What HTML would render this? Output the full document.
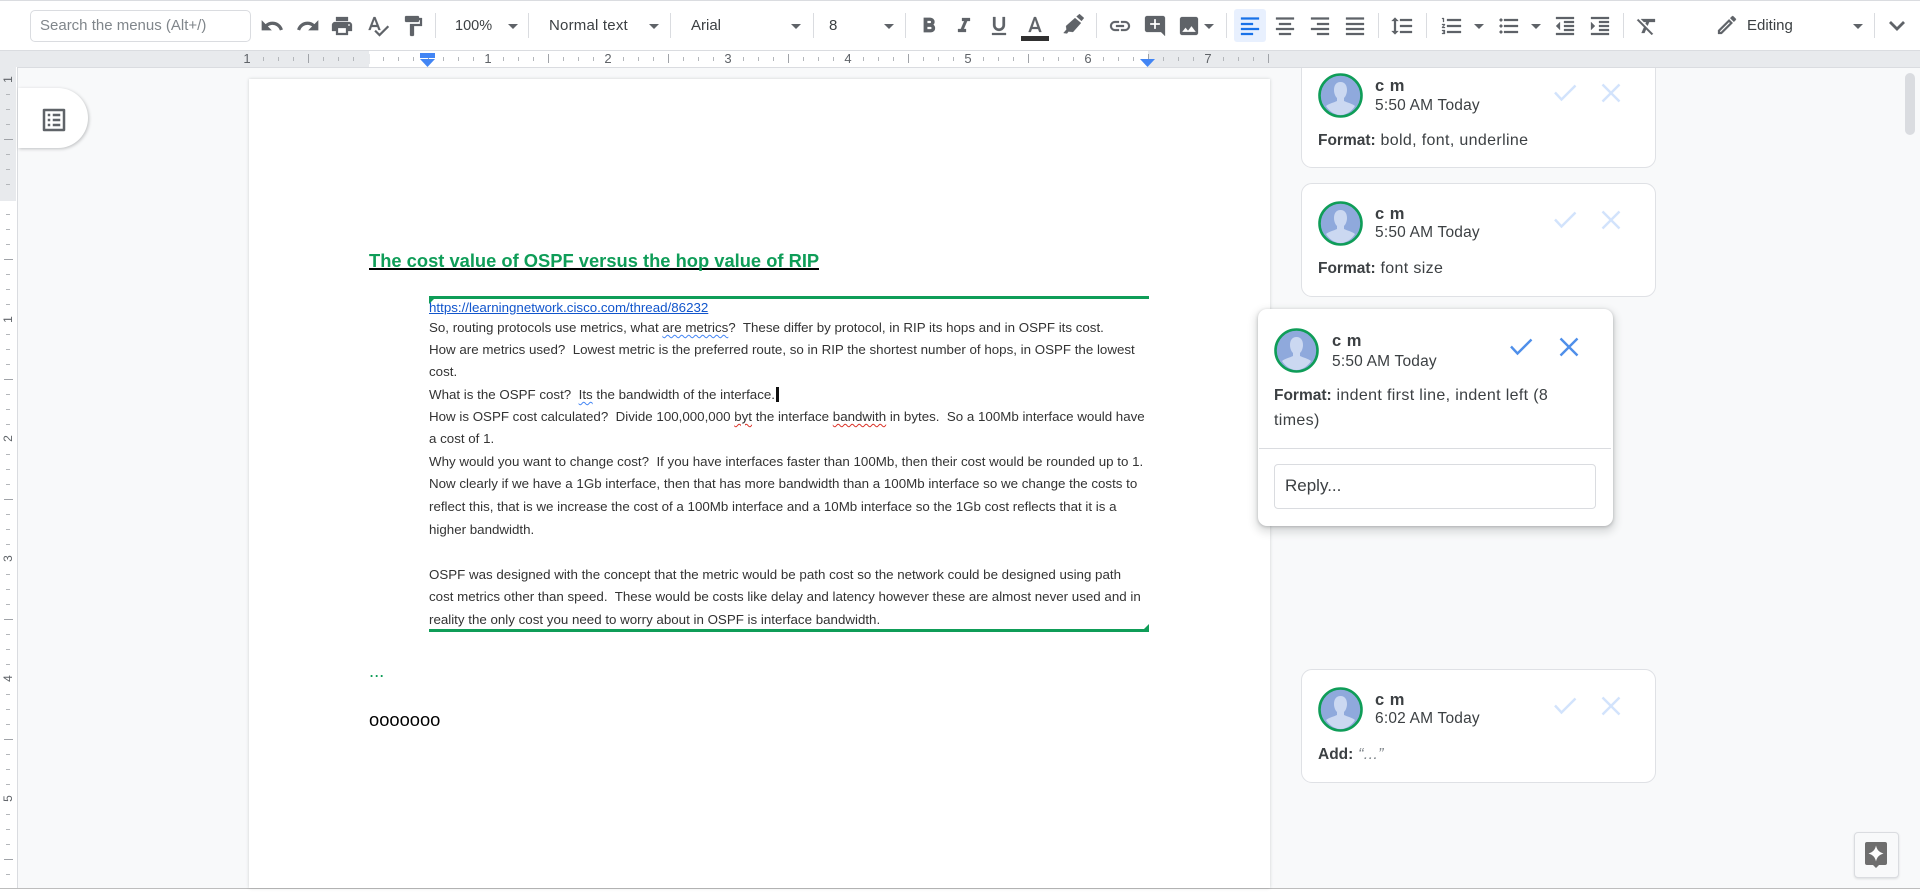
<!DOCTYPE html>
<html><head><meta charset="utf-8"><style>
html,body{margin:0;padding:0;width:1920px;height:895px;overflow:hidden;background:#fff;font-family:"Liberation Sans",sans-serif}
*{box-sizing:border-box}
.a{position:absolute}
svg.i{position:absolute;width:24px;height:24px;fill:#5f6368;top:14px;stroke:#5f6368;stroke-width:.25}
.sep{position:absolute;top:13px;width:1px;height:25px;background:#dadce0}
.car{position:absolute;top:24px;width:0;height:0;border-left:5px solid transparent;border-right:5px solid transparent;border-top:5px solid #5f6368}
.tt{position:absolute;top:16px;line-height:20px;font-size:15px;color:#3c4043;white-space:nowrap}
.d{position:absolute;top:51px;height:15px;line-height:15px;font-size:13px;color:#5f6368;width:12px;text-align:center}
.vd{position:absolute;left:2px;width:13px;height:13px;line-height:13px;font-size:12px;text-align:center;color:#5f6368;transform:rotate(-90deg)}
.l{position:absolute;left:429px;height:20px;line-height:20px;font-size:13.33px;color:#333;white-space:nowrap}
.sb{text-decoration:underline wavy #4285f4 1px;text-underline-offset:2px}
.sr{text-decoration:underline wavy #d93025 1px;text-underline-offset:2px}
.card{position:absolute;left:1301px;width:354.5px;height:114px;background:#fff;border:1px solid #dfe1e5;border-radius:11px}
.av{position:absolute;width:45px;height:45px}
.nm{position:absolute;font-size:16.5px;font-weight:bold;color:#3c4043;line-height:20px;letter-spacing:.5px;white-space:nowrap}
.tm{position:absolute;font-size:15.5px;color:#3c4043;line-height:20px;letter-spacing:.2px;white-space:nowrap}
.tx{position:absolute;font-size:16px;color:#3c4043;line-height:20px;letter-spacing:.35px;white-space:nowrap}
.tx b{font-size:15.5px;letter-spacing:0}
.ck{position:absolute;width:30px;height:24px;fill:none;stroke:#d2e3fc;stroke-width:2.4}
</style></head><body>

<!-- background -->
<div class="a" style="left:0;top:67px;width:1920px;height:821px;background:#f8f9fa"></div>
<div class="a" style="left:0;top:888px;width:1920px;height:1px;background:#bdbdbd"></div>

<!-- page -->
<div class="a" style="left:249px;top:79px;width:1020.5px;height:809px;background:#fff;box-shadow:0 0 3px rgba(60,64,67,.22)"></div>

<!-- cards clipped region -->
<div class="a" style="left:0;top:67px;width:1920px;height:821px;overflow:hidden">
  <div style="position:absolute;left:0;top:-67px;width:1920px;height:895px">
    <div class="card" style="top:54px"></div>
    <div class="card" style="top:182.5px"></div>
    <div class="card" style="top:668.5px"></div>
  </div>
</div>

<!-- toolbar -->
<div class="a" style="left:0;top:0;width:1920px;height:1px;background:#dadce0"></div>
<div class="a" style="left:0;top:1px;width:1920px;height:50px;background:#fff;border-bottom:1px solid #dadce0"></div>
<div class="a" style="left:29.5px;top:9.5px;width:221px;height:32.5px;border:1px solid #dadce0;border-radius:5px"></div>
<div class="tt" style="left:40px;color:#80868b;font-size:15px">Search the menus (Alt+/)</div>

<svg class="i" style="left:260px;stroke-width:.7" viewBox="0 0 24 24"><path d="M12.5 8c-2.65 0-5.05.99-6.9 2.6L2 7v9h9l-3.62-3.62c1.39-1.16 3.16-1.88 5.12-1.88 3.54 0 6.55 2.31 7.6 5.5l2.37-.78C21.08 11.03 17.15 8 12.5 8z"/></svg>
<svg class="i" style="left:296px;stroke-width:.7" viewBox="0 0 24 24"><path d="M18.4 10.6C16.55 8.99 14.15 8 11.5 8c-4.65 0-8.58 3.03-9.96 7.22L3.9 16c1.05-3.19 4.05-5.5 7.6-5.5 1.95 0 3.73.72 5.12 1.88L13 16h9V7l-3.6 3.6z"/></svg>
<svg class="i" style="left:330px" viewBox="0 0 24 24"><path d="M19 8H5c-1.66 0-3 1.34-3 3v6h4v4h12v-4h4v-6c0-1.66-1.34-3-3-3zm-3 11H8v-5h8v5zm3-7c-.55 0-1-.45-1-1s.45-1 1-1 1 .45 1 1-.45 1-1 1zm-1-9H6v4h12V3z"/></svg>
<svg class="i" style="left:366px" viewBox="0 0 24 24"><path d="M12.45 16h2.09L9.43 3H7.57L2.46 16h2.09l1.12-3h5.64l1.14 3zm-6.02-5L8.5 5.48 10.57 11H6.43zm15.16.59l-8.09 8.09L9.83 16l-1.41 1.41 5.09 5.09L23 13l-1.41-1.41z"/></svg>
<svg class="i" style="left:401px" viewBox="0 0 24 24"><path d="M18 4V3c0-.55-.45-1-1-1H5c-.55 0-1 .45-1 1v4c0 .55.45 1 1 1h12c.55 0 1-.45 1-1V6h1v4H9v11c0 .55.45 1 1 1h2c.55 0 1-.45 1-1v-9h8V4h-3z"/></svg>
<div class="sep" style="left:435px"></div>
<div class="tt" style="left:455px;font-size:14.5px">100%</div><div class="car" style="left:508px"></div>
<div class="sep" style="left:528px"></div>
<div class="tt" style="left:549px;letter-spacing:.2px">Normal text</div><div class="car" style="left:649px"></div>
<div class="sep" style="left:670px"></div>
<div class="tt" style="left:691px">Arial</div><div class="car" style="left:791px"></div>
<div class="sep" style="left:813px"></div>
<div class="tt" style="left:829px">8</div><div class="car" style="left:884px"></div>
<div class="sep" style="left:905px"></div>
<svg class="i" style="left:917px;stroke-width:.8" viewBox="0 0 24 24"><path d="M15.6 10.79c.97-.67 1.65-1.77 1.65-2.79 0-2.26-1.75-4-4-4H7v14h7.04c2.09 0 3.71-1.7 3.71-3.79 0-1.52-.86-2.82-2.15-3.42zM10 6.5h3c.83 0 1.5.67 1.5 1.5s-.67 1.5-1.5 1.5h-3v-3zm3.5 9H10v-3h3.5c.83 0 1.5.67 1.5 1.5s-.67 1.5-1.5 1.5z"/></svg>
<svg class="i" style="left:952px" viewBox="0 0 24 24"><path d="M10 4v3h2.21l-3.42 8H6v3h8v-3h-2.21l3.42-8H18V4z"/></svg>
<svg class="i" style="left:987px" viewBox="0 0 24 24"><path d="M12 17c3.31 0 6-2.69 6-6V3h-2.5v8c0 1.93-1.57 3.5-3.5 3.5S8.5 12.93 8.5 11V3H6v8c0 3.31 2.69 6 6 6zm-7 2v2h14v-2H5z"/></svg>
<svg class="i" style="left:1023px;top:14px" viewBox="0 0 24 24"><path d="M11 3 5.5 18h2.25l1.12-3h6.25l1.12 3h2.25L13 3h-2zm-1.38 10L12 5.67 14.38 13H9.62z"/></svg>
<div class="a" style="left:1021px;top:36px;width:28px;height:5px;background:#303030"></div>
<svg class="i" style="left:1061px;top:13px" viewBox="0 0 24 24"><path d="M14 5l6 5-8 9-4.5-.5L6 20.5 2.5 20l3-3.5L5 13zM15.5 3.5l3-2.500 4.500 4-2.500 3z"/></svg>
<div class="sep" style="left:1096px"></div>
<svg class="i" style="left:1108px" viewBox="0 0 24 24"><path d="M3.9 12c0-1.71 1.39-3.1 3.1-3.1h4V7H7c-2.76 0-5 2.24-5 5s2.24 5 5 5h4v-1.9H7c-1.71 0-3.1-1.39-3.1-3.1zM8 13h8v-2H8v2zm9-6h-4v1.9h4c1.71 0 3.1 1.39 3.1 3.1s-1.39 3.1-3.1 3.1h-4V17h4c2.76 0 5-2.24 5-5s-2.24-5-5-5z"/></svg>
<svg class="i" style="left:1143px" viewBox="0 0 24 24"><path d="M21.99 4c0-1.1-.89-2-1.99-2H4c-1.1 0-2 .9-2 2v12c0 1.1.9 2 2 2h14l4 4-.01-18zM17 11h-4v4h-2v-4H7V9h4V5h2v4h4v2z"/></svg>
<svg class="i" style="left:1177px" viewBox="0 0 24 24"><path d="M21 19V5c0-1.1-.9-2-2-2H5c-1.1 0-2 .9-2 2v14c0 1.1.9 2 2 2h14c1.1 0 2-.9 2-2zM8.500 13.500l2.500 3.010L14.500 12l4.500 6H5l3.500-4.500z"/></svg>
<div class="car" style="left:1204px"></div>
<div class="sep" style="left:1226px"></div>
<div class="a" style="left:1234px;top:9px;width:32px;height:33px;background:#e8f0fe;border-radius:3px"></div>
<svg class="i" style="left:1238px;fill:#1a73e8;stroke:#1a73e8" viewBox="0 0 24 24"><path d="M3 3.500h18v2H3zM3 9h12v2H3zM3 14h18v2H3zM3 19h12v2H3z"/></svg>
<svg class="i" style="left:1273px" viewBox="0 0 24 24"><path d="M3 3.500h18v2H3zM6 9h12v2H6zM3 14h18v2H3zM6 19h12v2H6z"/></svg>
<svg class="i" style="left:1308px" viewBox="0 0 24 24"><path d="M3 3.500h18v2H3zM9 9h12v2H9zM3 14h18v2H3zM9 19h12v2H9z"/></svg>
<svg class="i" style="left:1343px" viewBox="0 0 24 24"><path d="M3 3.500h18v2H3zM3 9h18v2H3zM3 14h18v2H3zM3 19h18v2H3z"/></svg>
<div class="sep" style="left:1378px"></div>
<svg class="i" style="left:1390px" viewBox="0 0 24 24"><path d="M6 7h2.500L5 3.500 1.500 7H4v10H1.500L5 20.500 8.500 17H6V7zm4-2v2h12V5H10zm0 14h12v-2H10v2zm0-6h12v-2H10v2z"/></svg>
<div class="sep" style="left:1426px"></div>
<svg class="i" style="left:1440px" viewBox="0 0 24 24"><path d="M2 17h2v.5H3v1h1v.5H2v1h3v-4H2v1zm1-9h1V4H2v1h1v3zm-1 3h1.800L2 13.100v.9h3v-1H3.200L5 10.900V10H2v1zm5-6v2h14V5H7zm0 14h14v-2H7v2zm0-6h14v-2H7v2z"/></svg>
<div class="car" style="left:1474px"></div>
<svg class="i" style="left:1497px" viewBox="0 0 24 24"><path d="M4 10.500c-.83 0-1.500.67-1.500 1.500s.67 1.500 1.500 1.500 1.500-.67 1.500-1.500-.67-1.500-1.500-1.500zm0-6c-.83 0-1.500.67-1.500 1.500S3.170 7.500 4 7.500 5.500 6.830 5.500 6 4.830 4.500 4 4.500zm0 12c-.83 0-1.500.68-1.500 1.500s.68 1.500 1.500 1.500 1.500-.68 1.500-1.500-.67-1.500-1.500-1.500zM7 19h14v-2H7v2zm0-6h14v-2H7v2zm0-8v2h14V5H7z"/></svg>
<div class="car" style="left:1531px"></div>
<svg class="i" style="left:1553px" viewBox="0 0 24 24"><path d="M11 17h10v-2H11v2zm-8-5l4 4V8l-4 4zm0 9h18v-2H3v2zM3 3v2h18V3H3zm8 6h10V7H11v2zm0 4h10v-2H11v2z"/></svg>
<svg class="i" style="left:1588px" viewBox="0 0 24 24"><path d="M3 21h18v-2H3v2zM3 8v8l4-4-4-4zm8 9h10v-2H11v2zM3 3v2h18V3H3zm8 6h10V7H11v2zm0 4h10v-2H11v2z"/></svg>
<div class="sep" style="left:1623px"></div>
<svg class="i" style="left:1635px" viewBox="0 0 24 24"><path d="M3.270 5L2 6.270l6.970 6.970L6.500 19h3l1.570-3.660L16.730 21 18 19.730 3.550 5.270 3.270 5zM6 5v.18L8.820 8h2.400l-.72 1.680 2.100 2.100L14.210 8H20V5H6z"/></svg>
<svg class="i" style="left:1715px;top:13px" viewBox="0 0 24 24"><path d="M14.060 9.020l.92.92L5.920 19H5v-.92l9.060-9.060M17.660 3c-.25 0-.51.1-.7.29l-1.830 1.830 3.750 3.750 1.830-1.830c.39-.39.39-1.020 0-1.410l-2.340-2.340c-.2-.2-.45-.29-.71-.29zm-3.600 3.190L3 17.250V21h3.750L17.810 9.940l-3.750-3.750z"/></svg>
<div class="tt" style="left:1747px;top:16px">Editing</div>
<div class="car" style="left:1853px"></div>
<div class="sep" style="left:1874px"></div>
<svg class="i" style="left:1885px;top:13px;fill:none;stroke:#5f6368;stroke-width:2.800" viewBox="0 0 24 24"><path d="M5 9l7 7 7-7"/></svg>

<!-- horizontal ruler -->
<div class="a" style="left:0;top:51px;width:1920px;height:17px;background:#e8eaed;border-bottom:1px solid #dadce0"></div>
<div class="a" style="left:369px;top:51px;width:779px;height:16px;background:#fff"></div>
<div class="a" style="left:248px;top:57px;width:1021px;height:4px;background:repeating-linear-gradient(90deg,#b4b7bb 0,#b4b7bb 1px,transparent 1px,transparent 15px)"></div>
<div class="a" style="left:308px;top:54px;width:961px;height:9px;background:repeating-linear-gradient(90deg,#a0a3a8 0,#a0a3a8 1px,transparent 1px,transparent 120px)"></div>
<div class="a" style="left:367px;top:54px;width:3px;height:10px;background:#e8eaed"></div>
<div class="d" style="left:241px;background:#e8eaed">1</div>
<div class="d" style="left:482px;background:#fff">1</div>
<div class="d" style="left:602px;background:#fff">2</div>
<div class="d" style="left:722px;background:#fff">3</div>
<div class="d" style="left:842px;background:#fff">4</div>
<div class="d" style="left:962px;background:#fff">5</div>
<div class="d" style="left:1082px;background:#fff">6</div>
<div class="d" style="left:1202px;background:#e8eaed">7</div>
<div class="a" style="left:420px;top:53px;width:15px;height:5px;background:#4285f4"></div>
<svg class="a" style="left:420px;top:59px" width="15" height="8"><path d="M0 0h15L7.500 8z" fill="#4285f4"/></svg>
<svg class="a" style="left:1140px;top:59px" width="15" height="8"><path d="M0 0h15L7.500 8z" fill="#4285f4"/></svg>

<!-- vertical ruler -->
<div class="a" style="left:0;top:67px;width:18px;height:821px;background:#fff;border-right:1px solid #dadce0"></div>
<div class="a" style="left:0;top:67px;width:16px;height:134px;background:#e8eaed"></div>
<div class="a" style="left:6px;top:79px;width:4px;height:809px;background:repeating-linear-gradient(180deg,#b4b7bb 0,#b4b7bb 1px,transparent 1px,transparent 15px)"></div>
<div class="a" style="left:4px;top:139px;width:9px;height:749px;background:repeating-linear-gradient(180deg,#a0a3a8 0,#a0a3a8 1px,transparent 1px,transparent 120px)"></div>
<div class="a" style="left:4px;top:197px;width:9px;height:4px;background:#e8eaed"></div>
<div class="vd" style="top:73px;background:#e8eaed">1</div>
<div class="vd" style="top:313px;background:#fff">1</div>
<div class="vd" style="top:432px;background:#fff">2</div>
<div class="vd" style="top:552px;background:#fff">3</div>
<div class="vd" style="top:672px;background:#fff">4</div>
<div class="vd" style="top:792px;background:#fff">5</div>

<!-- outline tab -->
<div class="a" style="left:18px;top:88px;width:70px;height:60px;background:#fff;border-radius:0 30px 30px 0;box-shadow:1px 1px 3px rgba(60,64,67,.3)"></div>
<svg class="a" style="left:39px;top:104.500px" width="30" height="30" viewBox="0 0 24 24" fill="#5f6368"><path d="M19 5v14H5V5h14m1.100-2H3.900c-.5 0-.9.4-.9.9v16.200c0 .4.4.9.9.9h16.200c.4 0 .9-.5.9-.9V3.900c0-.5-.5-.9-.9-.9zM11 7h6v2h-6V7zm0 4h6v2h-6v-2zm0 4h6v2h-6zM7 7h2v2H7zm0 4h2v2H7zm0 4h2v2H7z"/></svg>

<!-- document text -->
<div class="a" style="left:369px;top:268px;width:450px;height:2px;background:#000"></div>
<div class="a" style="left:369px;top:250px;height:22px;line-height:22px;font-size:18.33px;font-weight:bold;color:#0f9d58;white-space:nowrap">The cost value of OSPF versus the hop value of RIP</div>

<div class="a" style="left:429px;top:296px;width:720px;height:3px;background:#0f9d58"></div>
<svg class="a" style="left:429px;top:299px" width="5" height="5"><path d="M0 0h5L0 5z" fill="#0f9d58"/></svg>
<div class="a" style="left:429px;top:629px;width:720px;height:3px;background:#0f9d58"></div>
<svg class="a" style="left:1144px;top:624px" width="5" height="5"><path d="M5 0v5H0z" fill="#0f9d58"/></svg>

<div class="l" style="top:298px;color:#1155cc;text-decoration:underline">https://learningnetwork.cisco.com/thread/86232</div>
<div class="l" style="top:318px">So, routing protocols use metrics, what <span class="sb">are metrics</span>?&nbsp; These differ by protocol, in RIP its hops and in OSPF its cost.</div>
<div class="l" style="top:340px">How are metrics used?&nbsp; Lowest metric is the preferred route, so in RIP the shortest number of hops, in OSPF the lowest</div>
<div class="l" style="top:362px">cost.</div>
<div class="l" style="top:385px">What is the OSPF cost?&nbsp; <span class="sb">Its</span> the bandwidth of the interface.</div>
<div class="a" style="left:776px;top:386.500px;width:2.500px;height:15px;background:#111"></div>
<div class="l" style="top:407px">How is OSPF cost calculated?&nbsp; Divide 100,000,000 <span class="sr">byt</span> the interface <span class="sr">bandwith</span> in bytes.&nbsp; So a 100Mb interface would have</div>
<div class="l" style="top:429px">a cost of 1.</div>
<div class="l" style="top:452px">Why would you want to change cost?&nbsp; If you have interfaces faster than 100Mb, then their cost would be rounded up to 1.</div>
<div class="l" style="top:474px">Now clearly if we have a 1Gb interface, then that has more bandwidth than a 100Mb interface so we change the costs to</div>
<div class="l" style="top:497px">reflect this, that is we increase the cost of a 100Mb interface and a 10Mb interface so the 1Gb cost reflects that it is a</div>
<div class="l" style="top:520px">higher bandwidth.</div>
<div class="l" style="top:565px">OSPF was designed with the concept that the metric would be path cost so the network could be designed using path</div>
<div class="l" style="top:587px">cost metrics other than speed.&nbsp; These would be costs like delay and latency however these are almost never used and in</div>
<div class="l" style="top:610px">reality the only cost you need to worry about in OSPF is interface bandwidth.</div>

<div class="a" style="left:369px;top:660px;height:22px;line-height:22px;font-size:18.330px;color:#0f9d58">...</div>
<div class="a" style="left:369px;top:709px;height:22px;line-height:22px;font-size:18.330px;color:#000">ooooooo</div>

<!-- avatars + card text -->
<div class="a" style="left:0;top:67px;width:1920px;height:821px;overflow:hidden">
<div style="position:absolute;left:0;top:-67px;width:1920px;height:895px">
  <!-- card 1 -->
  <svg class="av" style="left:1318px;top:73px" viewBox="0 0 45 45"><circle cx="22.500" cy="22.500" r="21" fill="#8fa9dc" stroke="#0f9d58" stroke-width="2.600"/><path d="M22.500 9c4.500 0 6.500 3.500 6.500 8 0 4-1.800 7-3 8v3c3 1.500 8 2.500 11 5-3 5-8.500 9-14.500 9S11 38 8 33c3-2.500 8-3.500 11-5v-3c-1.200-1-3-4-3-8 0-4.500 2-8 6.500-8z" fill="#cbd8f1"/></svg>
  <div class="nm" style="left:1375px;top:76px">c m</div>
  <div class="tm" style="left:1375px;top:96px">5:50 AM Today</div>
  <svg class="ck" style="left:1550px;top:80.500px" viewBox="0 0 30 24"><path d="M5 11.500l6.500 7L25.500 4.500"/></svg>
  <svg class="ck" style="left:1596px;top:80.500px" viewBox="0 0 30 24"><path d="M6.500 3.500l17 17M23.500 3.500l-17 17"/></svg>
  <div class="tx" style="left:1318px;top:131px"><b>Format:</b> bold, font, underline</div>
  <!-- card 2 -->
  <svg class="av" style="left:1318px;top:201px" viewBox="0 0 45 45"><circle cx="22.500" cy="22.500" r="21" fill="#8fa9dc" stroke="#0f9d58" stroke-width="2.600"/><path d="M22.500 9c4.500 0 6.500 3.500 6.500 8 0 4-1.800 7-3 8v3c3 1.500 8 2.500 11 5-3 5-8.500 9-14.500 9S11 38 8 33c3-2.500 8-3.500 11-5v-3c-1.200-1-3-4-3-8 0-4.500 2-8 6.500-8z" fill="#cbd8f1"/></svg>
  <div class="nm" style="left:1375px;top:204px">c m</div>
  <div class="tm" style="left:1375px;top:223px">5:50 AM Today</div>
  <svg class="ck" style="left:1550px;top:207.500px" viewBox="0 0 30 24"><path d="M5 11.500l6.500 7L25.500 4.500"/></svg>
  <svg class="ck" style="left:1596px;top:207.500px" viewBox="0 0 30 24"><path d="M6.500 3.500l17 17M23.500 3.500l-17 17"/></svg>
  <div class="tx" style="left:1318px;top:259px"><b>Format:</b> font size</div>
  <!-- card 3 -->
  <svg class="av" style="left:1318px;top:687px" viewBox="0 0 45 45"><circle cx="22.500" cy="22.500" r="21" fill="#8fa9dc" stroke="#0f9d58" stroke-width="2.600"/><path d="M22.500 9c4.500 0 6.500 3.500 6.500 8 0 4-1.800 7-3 8v3c3 1.500 8 2.500 11 5-3 5-8.500 9-14.500 9S11 38 8 33c3-2.500 8-3.500 11-5v-3c-1.200-1-3-4-3-8 0-4.500 2-8 6.500-8z" fill="#cbd8f1"/></svg>
  <div class="nm" style="left:1375px;top:690px">c m</div>
  <div class="tm" style="left:1375px;top:709px">6:02 AM Today</div>
  <svg class="ck" style="left:1550px;top:693.500px" viewBox="0 0 30 24"><path d="M5 11.500l6.500 7L25.500 4.500"/></svg>
  <svg class="ck" style="left:1596px;top:693.500px" viewBox="0 0 30 24"><path d="M6.500 3.500l17 17M23.500 3.500l-17 17"/></svg>
  <div class="tx" style="left:1318px;top:745px"><b>Add:</b> <span style="color:#80868b;font-style:italic">&#8220;...&#8221;</span></div>
</div>
</div>

<!-- active card -->
<div class="a" style="left:1258px;top:309px;width:355px;height:217px;background:#fff;border-radius:9px;box-shadow:0 1px 3px rgba(60,64,67,.3),0 4px 8px 3px rgba(60,64,67,.15)"></div>
<svg class="av" style="left:1274px;top:328px" viewBox="0 0 45 45"><circle cx="22.500" cy="22.500" r="21" fill="#8fa9dc" stroke="#0f9d58" stroke-width="2.600"/><path d="M22.500 9c4.500 0 6.500 3.500 6.500 8 0 4-1.800 7-3 8v3c3 1.500 8 2.500 11 5-3 5-8.500 9-14.500 9S11 38 8 33c3-2.500 8-3.500 11-5v-3c-1.200-1-3-4-3-8 0-4.500 2-8 6.500-8z" fill="#cbd8f1"/></svg>
<div class="nm" style="left:1332px;top:331px">c m</div>
<div class="tm" style="left:1332px;top:351.500px">5:50 AM Today</div>
<svg class="ck" style="left:1506px;top:335px;stroke:#4f8fea" viewBox="0 0 30 24"><path d="M5 11.500l6.500 7L25.500 4.500"/></svg>
<svg class="ck" style="left:1553.500px;top:335px;stroke:#4f8fea" viewBox="0 0 30 24"><path d="M6.500 3.500l17 17M23.500 3.500l-17 17"/></svg>
<div class="tx" style="left:1274px;top:386px"><b>Format:</b> indent first line, indent left (8</div>
<div class="tx" style="left:1274px;top:411px">times)</div>
<div class="a" style="left:1259px;top:448px;width:352px;height:1px;background:#dadce0"></div>
<div class="a" style="left:1274px;top:464px;width:322px;height:45px;border:1px solid #dadce0;border-radius:4px"></div>
<div class="tx" style="left:1285px;top:476px;font-size:17px;letter-spacing:0;color:#3c4043">Reply...</div>

<!-- scrollbar -->
<div class="a" style="left:1905px;top:73px;width:10px;height:62px;background:#dadce0;border-radius:5px"></div>

<!-- sparkle button -->
<div class="a" style="left:1854px;top:832px;width:45px;height:46px;background:#f8f9fa;border:1px solid #dadce0;border-radius:4px;box-shadow:0 1px 2px rgba(60,64,67,.15)"></div>
<svg class="a" style="left:1864px;top:841px" width="24" height="28" viewBox="0 0 24 28"><path d="M3 1h18a2 2 0 0 1 2 2v19a2 2 0 0 1-2 2h-6l-3 3-3-3H3a2 2 0 0 1-2-2V3a2 2 0 0 1 2-2z" fill="#6e6e6e"/><path d="M12 4.500c.9 4.200 2.800 6.500 7.500 8-4.700 1.500-6.600 3.800-7.500 8-.9-4.200-2.800-6.500-7.500-8 4.700-1.500 6.600-3.800 7.500-8z" fill="#fff"/></svg>

</body></html>
